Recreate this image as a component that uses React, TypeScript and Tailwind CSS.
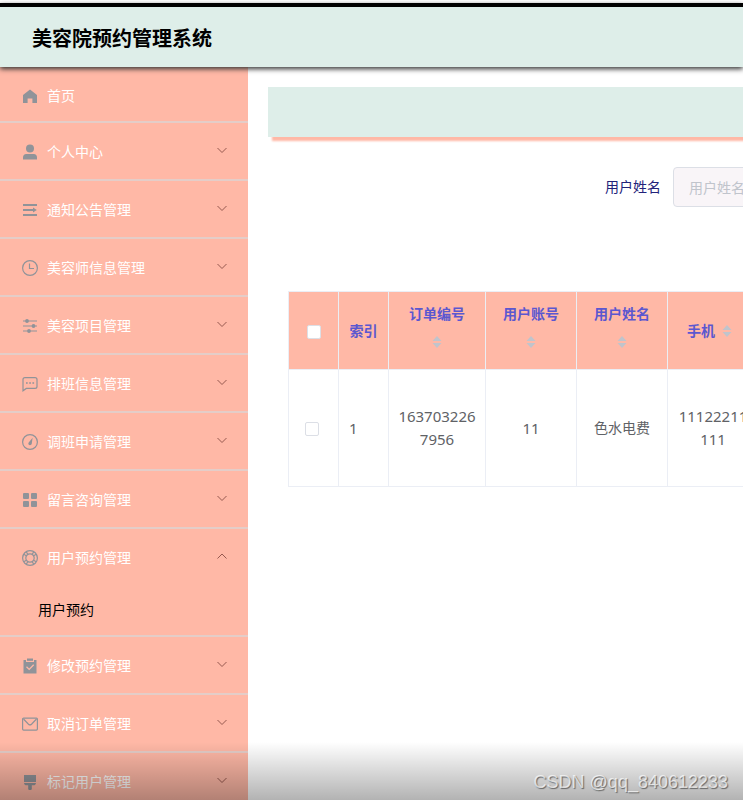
import React, { useState } from "react";

interface MenuEntry {
  title: string;
  icon: React.ReactNode;
  children?: string[];
}

interface Order {
  id: number;
  orderNo: string;
  account: string;
  name: string;
  phone: string;
}

const MENU: MenuEntry[] = [
  {
    title: "个人中心",
    icon: (
      <g fill="currentColor" stroke="none">
        <circle cx="8" cy="4.500" r="4" />
        <path d="M1 15.500v-2.300c0-1.900 1.300-3.200 3.200-3.200h7.600c1.900 0 3.200 1.300 3.200 3.200v2.300z" />
      </g>
    ),
  },
  {
    title: "通知公告管理",
    icon: (
      <>
        <path d="M1 3h14M1 8h10M1 13h14" strokeWidth="2" />
        <path d="M11 5.400v5.200L14.800 8z" fill="currentColor" stroke="none" />
      </>
    ),
  },
  {
    title: "美容师信息管理",
    icon: (
      <>
        <circle cx="8" cy="8" r="7.400" />
        <path d="M7.500 3.500v5h4.500" />
      </>
    ),
  },
  {
    title: "美容项目管理",
    icon: (
      <>
        <path d="M1 3h14M1 8h14M1 13h14" />
        <g fill="currentColor" stroke="none">
          <circle cx="5" cy="3" r="1.900" />
          <circle cx="11.500" cy="8" r="1.900" />
          <circle cx="7" cy="13" r="1.900" />
        </g>
      </>
    ),
  },
  {
    title: "排班信息管理",
    icon: (
      <>
        <path d="M1 14.800V3.500C1 2.300 1.800 1.600 3 1.600h10c1.200 0 2 .7 2 1.900v7c0 1.200-.8 1.900-2 1.900H4.300z" />
        <path d="M4 7h1.700M7.200 7h1.700M10.400 7h1.700" strokeWidth="1.600" />
      </>
    ),
  },
  {
    title: "调班申请管理",
    icon: (
      <>
        <circle cx="8" cy="8" r="7.400" />
        <path
          d="M10.600 3.800L9.800 9.500c-.2 1.700-2.400 2.200-3.200.9-.5-.8-.2-1.500.3-2.100z"
          fill="currentColor"
          stroke="none"
        />
      </>
    ),
  },
  {
    title: "留言咨询管理",
    icon: (
      <g fill="currentColor" stroke="none">
        <rect x="1" y="1" width="6" height="6" rx="1" />
        <rect x="9" y="1" width="6" height="6" rx="1" />
        <rect x="1" y="9" width="6" height="6" rx="1" />
        <rect x="9" y="9" width="6" height="6" rx="1" />
      </g>
    ),
  },
  {
    title: "用户预约管理",
    icon: (
      <>
        <circle cx="8" cy="8" r="7.400" />
        <circle cx="8" cy="8" r="4.200" />
        <path d="M4.300 1.700l1.500 2.700M11.700 1.700l-1.500 2.700M4.300 14.300l1.500-2.700M11.700 14.300l-1.500-2.700M1.700 4.300l2.700 1.500M14.300 4.300l-2.700 1.500M1.700 11.700l2.700-1.500M14.300 11.700l-2.700-1.500" />
      </>
    ),
    children: ["用户预约"],
  },
  {
    title: "修改预约管理",
    icon: (
      <>
        <path d="M1.500 2H4v2h8V2h2.500v13.500h-13z" fill="currentColor" stroke="none" />
        <path d="M5 .5h6v2.300H5z" fill="currentColor" stroke="none" />
        <path d="M4.500 8.800l2.700 2.600 4.500-4.600" stroke="#ffb8a6" strokeWidth="1.300" />
      </>
    ),
  },
  {
    title: "取消订单管理",
    icon: (
      <>
        <rect x=".6" y="2.100" width="14.800" height="12" rx="1" />
        <path d="M1.500 3l5 5.200c1 .9 2 .9 3 0l5-5.200" />
      </>
    ),
  },
  {
    title: "标记用户管理",
    icon: (
      <g fill="currentColor" stroke="none">
        <path d="M2 1h12v7H2z" />
        <path d="M2 9h12c-.2 1.500-1.200 2.300-2.500 2.300H9.800V15c0 1.300-3.600 1.300-3.600 0v-3.700H4.500C3.200 11.300 2.200 10.500 2 9z" />
      </g>
    ),
  },
];

const ORDERS: Order[] = [
  { id: 1, orderNo: "1637032267956", account: "11", name: "色水电费", phone: "11122211111" },
];

const HEADERS = ["订单编号", "用户账号", "用户姓名", "手机"];

function MenuIcon({ children }: { children: React.ReactNode }) {
  return (
    <svg
      viewBox="0 0 16 16"
      className="size-4 shrink-0 text-[#909399]"
      fill="none"
      stroke="currentColor"
      strokeWidth="1.200"
      aria-hidden="true"
    >
      {children}
    </svg>
  );
}

function SortCaret() {
  return (
    <svg viewBox="0 0 10 12" className="h-3 w-[10px] fill-[#c0c4cc]" aria-hidden="true">
      <path d="M5 0l4.500 5h-9zM5 12l4.500-5h-9z" />
    </svg>
  );
}

function Sidebar() {
  const [open, setOpen] = useState("用户预约管理");

  return (
    <nav className="w-[248px] shrink-0 bg-[#ffb8a6] text-sm text-white">
      <a
        href="#home"
        className="flex h-14 items-center gap-[9px] border-b-2 border-[#e4cdc8] pt-[3px] pl-[22px]"
      >
        <MenuIcon>
          <path d="M8 1.500L1 7v8h4.600v-4.500h4.800V15H15V7z" fill="currentColor" stroke="none" />
        </MenuIcon>
        <span>首页</span>
      </a>
      {MENU.map((entry) => {
        const expanded = open === entry.title;
        return (
          <div key={entry.title} className="border-b-2 border-[#e4cdc8]">
            <button
              type="button"
              aria-expanded={expanded}
              onClick={() => setOpen(expanded ? "" : entry.title)}
              className="flex h-14 w-full items-center gap-[9px] pt-px pr-5 pl-[22px] text-left"
            >
              <MenuIcon>{entry.icon}</MenuIcon>
              <span className="flex-1">{entry.title}</span>
              <svg
                viewBox="0 0 12 12"
                className="mb-1 size-3 fill-none stroke-[#96594f]"
                aria-hidden="true"
              >
                <path d={expanded ? "M1.500 8.500L6 4l4.500 4.500" : "M1.500 4L6 8.500 10.500 4"} />
              </svg>
            </button>
            {expanded &&
              entry.children?.map((child) => (
                <a key={child} href="#orders" className="flex h-[50px] items-center pl-[38px] text-black">
                  {child}
                </a>
              ))}
          </div>
        );
      })}
    </nav>
  );
}

function OrderTable() {
  return (
    <table className="w-[470px] table-fixed border-collapse border border-[#ebeef5] text-center text-sm leading-[23px]">
      <colgroup>
        <col className="w-[50px]" />
        <col className="w-[50px]" />
        <col className="w-[97px]" />
        <col className="w-[91px]" />
        <col className="w-[91px]" />
        <col className="w-[91px]" />
      </colgroup>
      <thead>
        <tr className="h-[78px] bg-[#ffb8a6] text-[#5b57d0]">
          <th className="border border-[#ebeef5] pl-[18px] text-left">
            <input
              type="checkbox"
              aria-label="全选"
              className="size-[14px] appearance-none rounded-xs border border-[#dcdfe6] bg-white align-middle"
            />
          </th>
          <th className="border border-[#ebeef5] font-bold">索引</th>
          {HEADERS.map((header) => (
            <th key={header} className="border border-[#ebeef5] px-2 font-bold">
              <span className="flex flex-wrap items-center justify-center px-[2px]">
                <span>{header}</span>
                <button
                  type="button"
                  aria-label={`${header}排序`}
                  className="flex h-[34px] w-6 items-center justify-center"
                >
                  <SortCaret />
                </button>
              </span>
            </th>
          ))}
        </tr>
      </thead>
      <tbody>
        {ORDERS.map((order) => (
          <tr key={order.id} className="h-[117px] text-[15px] text-[#606266]">
            <td className="border border-[#ebeef5] pl-4 text-left">
              <input
                type="checkbox"
                aria-label={`选择 ${order.orderNo}`}
                className="size-[14px] appearance-none rounded-xs border border-[#dcdfe6] bg-white align-middle"
              />
            </td>
            <td className="border border-[#ebeef5] px-[10px] text-left">{order.id}</td>
            <td className="border border-[#ebeef5] px-2 break-all">{order.orderNo}</td>
            <td className="border border-[#ebeef5] px-2 break-all">{order.account}</td>
            <td className="border border-[#ebeef5] px-2 text-sm">{order.name}</td>
            <td className="border border-[#ebeef5] px-2 break-all">{order.phone}</td>
          </tr>
        ))}
      </tbody>
    </table>
  );
}

export default function App() {
  return (
    <div className="relative flex h-screen flex-col overflow-hidden bg-white pt-[3px] font-['Noto_Sans','Noto_Sans_CJK_SC',sans-serif]">
      <header className="relative z-10 flex h-16 shrink-0 items-center border-t-4 border-black bg-[#deeee9] px-8 pt-1 shadow-[0_2px_5px_#333]">
        <h1 className="text-xl font-bold text-black">美容院预约管理系统</h1>
      </header>

      <div className="flex min-h-0 flex-1">
        <Sidebar />
        <main className="min-w-0 flex-1 overflow-hidden pt-5 pl-5">
          <div className="h-[50px] bg-[#deeee9] shadow-[4px_4px_2px_#ffb8a6]" />
          <div className="px-5 pt-[30px]">
            <form className="flex items-center gap-3 pl-[317px] text-sm">
              <label htmlFor="user-name" className="shrink-0 text-[#22227a]">
                用户姓名
              </label>
              <input
                id="user-name"
                type="text"
                placeholder="用户姓名"
                className="h-10 w-[200px] shrink-0 rounded border border-[#dcdfe6] bg-[#f9f5f8] px-[15px] placeholder:text-[#c0c4cc]"
              />
            </form>
            <div className="pt-[84px]">
              <OrderTable />
            </div>
          </div>
        </main>
      </div>

      <div className="pointer-events-none absolute inset-x-0 bottom-0 z-20 flex h-[58px] items-end justify-end bg-linear-to-b from-black/0 to-black/30 px-[15px] pb-1">
        <span className="font-['Liberation_Sans',sans-serif] text-lg text-white/70 [text-shadow:1px_1px_1px_#666]">
          CSDN @qq_840612233
        </span>
      </div>
    </div>
  );
}
